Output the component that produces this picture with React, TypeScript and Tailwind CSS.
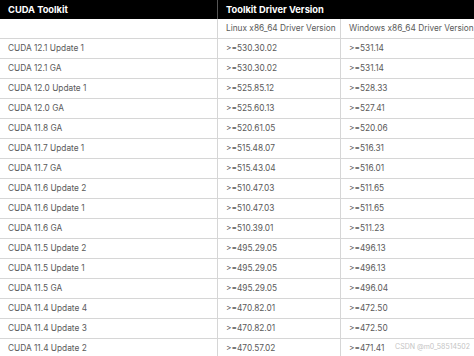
import React from 'react';

const rows: [string, string, string][] = [
  ['CUDA 12.1 Update 1', '>=530.30.02', '>=531.14'],
  ['CUDA 12.1 GA', '>=530.30.02', '>=531.14'],
  ['CUDA 12.0 Update 1', '>=525.85.12', '>=528.33'],
  ['CUDA 12.0 GA', '>=525.60.13', '>=527.41'],
  ['CUDA 11.8 GA', '>=520.61.05', '>=520.06'],
  ['CUDA 11.7 Update 1', '>=515.48.07', '>=516.31'],
  ['CUDA 11.7 GA', '>=515.43.04', '>=516.01'],
  ['CUDA 11.6 Update 2', '>=510.47.03', '>=511.65'],
  ['CUDA 11.6 Update 1', '>=510.47.03', '>=511.65'],
  ['CUDA 11.6 GA', '>=510.39.01', '>=511.23'],
  ['CUDA 11.5 Update 2', '>=495.29.05', '>=496.13'],
  ['CUDA 11.5 Update 1', '>=495.29.05', '>=496.13'],
  ['CUDA 11.5 GA', '>=495.29.05', '>=496.04'],
  ['CUDA 11.4 Update 4', '>=470.82.01', '>=472.50'],
  ['CUDA 11.4 Update 3', '>=470.82.01', '>=472.50'],
  ['CUDA 11.4 Update 2', '>=470.57.02', '>=471.41'],
];

const cell = 'h-[20px] flex items-center pl-[8px] whitespace-nowrap border-b border-[#d6d6d6]';

export default function App() {
  return (
    <div className="relative w-[474px] h-[356px] overflow-hidden bg-white font-['Inter','Liberation_Sans',sans-serif] text-[8.3px] text-[#5a5a5a]">
      <div className="grid grid-cols-[218px_123px_133px]">
        {/* header */}
        <div className="h-[19px] flex items-center pl-[8px] bg-black text-white font-bold text-[9.3px] border-r border-[#555]">
          CUDA Toolkit
        </div>
        <div className="col-span-2 h-[19px] flex items-center pl-[8px] bg-black text-white font-bold text-[9.3px]">
          Toolkit Driver Version
        </div>

        {/* sub header */}
        <div className={`${cell} border-r`} />
        <div className={`${cell} border-r`}>Linux x86_64 Driver Version</div>
        <div className={cell}>Windows x86_64 Driver Version</div>

        {rows.map(([name, linux, win]) => (
          <React.Fragment key={name}>
            <div className={`${cell} border-r`}>{name}</div>
            <div className={`${cell} border-r`}>{linux}</div>
            <div className={cell}>{win}</div>
          </React.Fragment>
        ))}
      </div>

      {/* watermark */}
      <span className="absolute right-[4px] bottom-[4px] text-[7px] text-[#c4c4c4]">
        CSDN @m0_58514502
      </span>
    </div>
  );
}
